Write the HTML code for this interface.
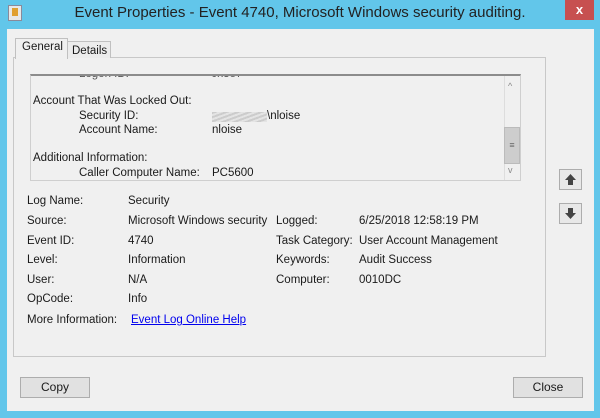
<!DOCTYPE html>
<html><head><style>
*{margin:0;padding:0;box-sizing:border-box}
body{width:600px;height:418px;background:#62c6ea;font-family:"Liberation Sans",sans-serif;font-size:12px;color:#1a1a1a;position:relative;overflow:hidden}
.a{position:absolute;white-space:nowrap}
.client{position:absolute;left:7px;top:29px;width:587px;height:382px;background:#f0f0f0}
.btn{position:absolute;border:1px solid #adadad;background:#e1e1e1;text-align:center;line-height:19px;font-size:12px}
.t{position:absolute;white-space:nowrap;font-size:11.5px}
</style></head><body>
<div class="a" style="left:8px;top:5px;width:14px;height:16px;background:#e8e8e8;border:1px solid #8a8a9a"></div>
<div class="a" style="left:12px;top:8px;width:6px;height:8px;background:#e0a030"></div>
<div class="a" style="left:0;top:4px;width:600px;text-align:center;font-size:15px;color:#222">Event Properties - Event 4740, Microsoft Windows security auditing.</div>
<div class="a" style="left:565px;top:0;width:29px;height:20px;background:#c75050;color:#fff;text-align:center;font-weight:bold;font-size:13px;line-height:19px">x</div>
<div class="client"></div>
<div class="a" style="left:13px;top:57px;width:533px;height:300px;border:1px solid #c8c8c8;background:#f0f0f0"></div>
<div class="a" style="left:67px;top:41px;width:44px;height:17px;border:1px solid #c0c0c0;border-bottom:none;background:#ececec;font-size:11.5px;padding:3px 0 0 4px">Details</div>
<div class="a" style="left:15px;top:38px;width:53px;height:21px;border:1px solid #c0c0c0;border-bottom:none;background:#f0f0f0;font-size:11.5px;padding:2px 0 0 6px">General</div>
<div class="a" style="left:30px;top:74px;width:491px;height:107px;border:1px solid #cfcfcf;border-top:2px solid #8c8c8c;background:#f0f0f0;overflow:hidden">
<div class="t" style="left:48px;top:-8px;color:#555">Logon ID:</div>
<div class="t" style="left:180px;top:-8px;color:#555">0x3e7</div>
<div class="t" style="left:2px;top:19px">Account That Was Locked Out:</div>
<div class="t" style="left:48px;top:34px">Security ID:</div>
<div class="a" style="left:181px;top:36px;width:55px;height:10px;background:repeating-linear-gradient(160deg,#ccc 0 2px,#e4e4e4 2px 4px)"></div>
<div class="t" style="left:236px;top:34px">\nloise</div>
<div class="t" style="left:48px;top:48px">Account Name:</div>
<div class="t" style="left:181px;top:48px">nloise</div>
<div class="t" style="left:2px;top:76px">Additional Information:</div>
<div class="t" style="left:48px;top:91px">Caller Computer Name:</div>
<div class="t" style="left:181px;top:91px">PC5600</div>
<div class="a" style="left:473px;top:0;width:16px;height:104px;border-left:1px solid #ddd;background:#f0f0f0"></div>
<div class="a" style="left:477px;top:5px;font-size:9px;color:#888">^</div>
<div class="a" style="left:473px;top:51px;width:16px;height:37px;background:#cdcdcd;border:1px solid #bbb;text-align:center;font-size:9px;line-height:35px;color:#666">≡</div>
<div class="a" style="left:477px;top:89px;font-size:9px;color:#888">v</div>
</div>
<div class="t" style="left:27px;top:195px">Log Name:</div><div class="t" style="left:128px;top:195px">Security</div>
<div class="t" style="left:27px;top:215px">Source:</div><div class="t" style="left:128px;top:215px">Microsoft Windows security</div>
<div class="t" style="left:276px;top:215px">Logged:</div><div class="t" style="left:359px;top:215px">6/25/2018 12:58:19 PM</div>
<div class="t" style="left:27px;top:235px">Event ID:</div><div class="t" style="left:128px;top:235px">4740</div>
<div class="t" style="left:276px;top:235px">Task Category:</div><div class="t" style="left:359px;top:235px">User Account Management</div>
<div class="t" style="left:27px;top:254px">Level:</div><div class="t" style="left:128px;top:254px">Information</div>
<div class="t" style="left:276px;top:254px">Keywords:</div><div class="t" style="left:359px;top:254px">Audit Success</div>
<div class="t" style="left:27px;top:274px">User:</div><div class="t" style="left:128px;top:274px">N/A</div>
<div class="t" style="left:276px;top:274px">Computer:</div><div class="t" style="left:359px;top:274px">0010DC</div>
<div class="t" style="left:27px;top:293px">OpCode:</div><div class="t" style="left:128px;top:293px">Info</div>
<div class="t" style="left:27px;top:314px">More Information:</div><div class="t" style="left:131px;top:314px;color:#0000ee;text-decoration:underline">Event Log Online Help</div>
<div class="btn" style="left:559px;top:169px;width:23px;height:21px;background:#e8e8e8"><svg width="21" height="19" viewBox="0 0 21 19"><path d="M10.5 4 L16 10 H13 V15 H8 V10 H5 Z" fill="#444"/></svg></div>
<div class="btn" style="left:559px;top:203px;width:23px;height:21px;background:#e8e8e8"><svg width="21" height="19" viewBox="0 0 21 19"><path d="M10.5 15 L16 9 H13 V4 H8 V9 H5 Z" fill="#444"/></svg></div>
<div class="btn" style="left:20px;top:377px;width:70px;height:21px">Copy</div>
<div class="btn" style="left:513px;top:377px;width:70px;height:21px">Close</div>
</body></html>
